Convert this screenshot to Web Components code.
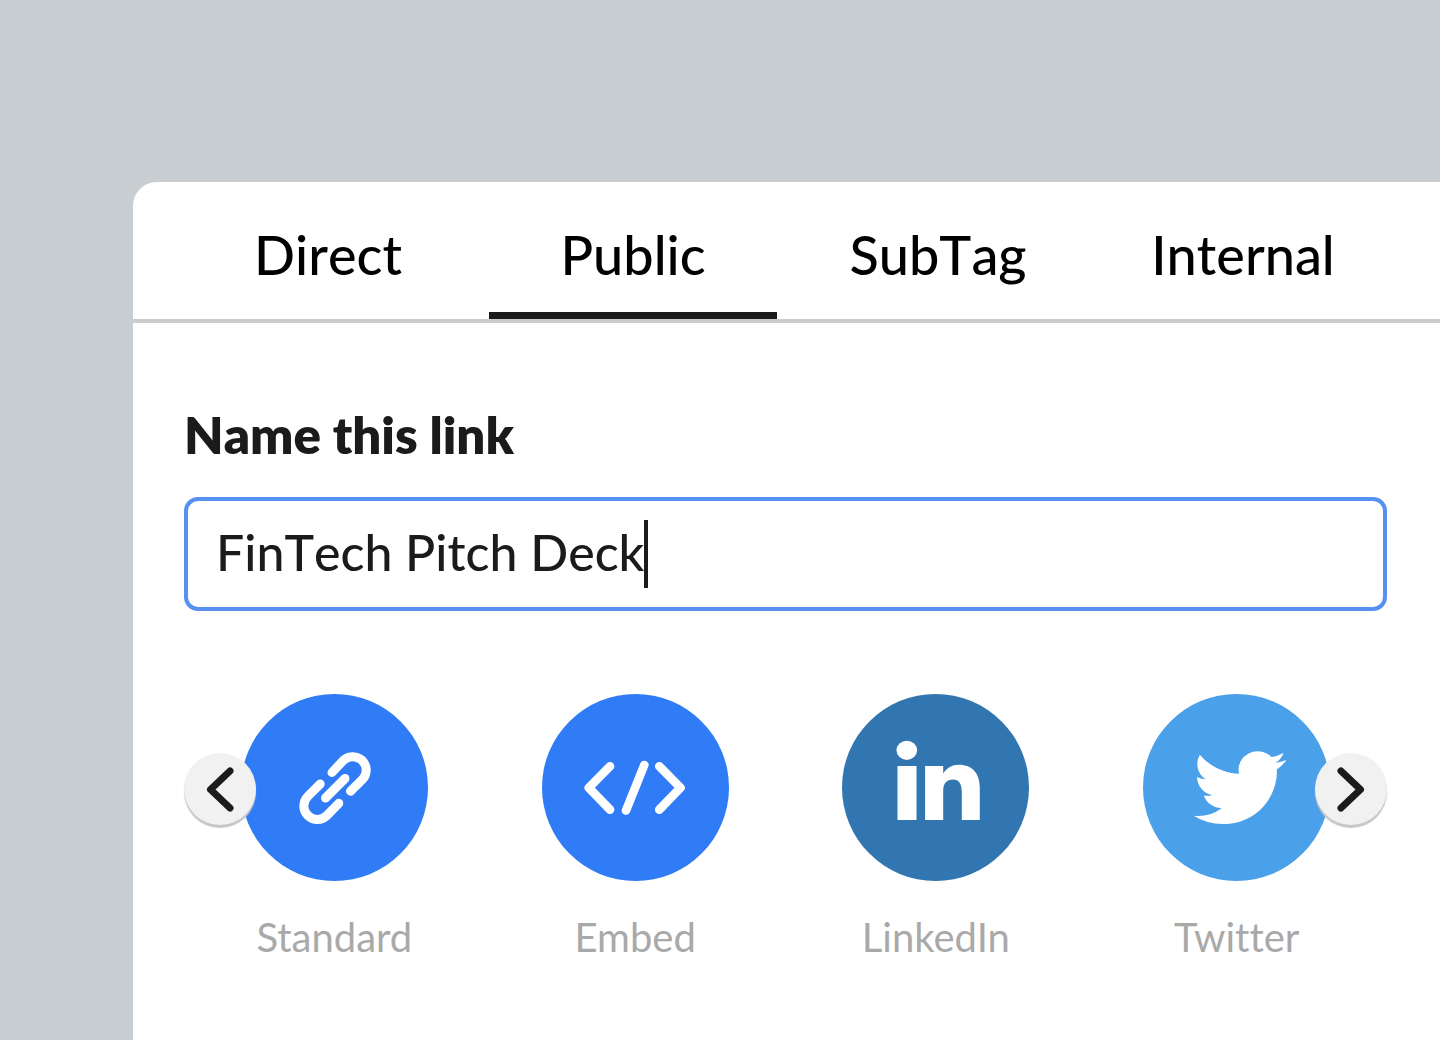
<!DOCTYPE html>
<html lang="en">
<head>
<meta charset="utf-8">
<meta name="viewport" content="width=device-width, initial-scale=1">
<title>Share link</title>
<style>
  body {
    margin: 0;
    background: #c9ced2;
    color: #1b1b1b;
    font-family: Lato, "Open Sans", sans-serif;
    font-kerning: none;
    font-variant-ligatures: none;
  }
</style>
</head>
<body>
<share-panel>
  <tab-bar slot="tabs">
    <tab-item>Direct</tab-item>
    <tab-item selected>Public</tab-item>
    <tab-item>SubTag</tab-item>
    <tab-item>Internal</tab-item>
  </tab-bar>
  <text-field label="Name this link" value="FinTech Pitch Deck"></text-field>
  <channel-carousel>
    <channel-item icon="link" style="--tint:#307bf6">Standard</channel-item>
    <channel-item icon="code" style="--tint:#307bf6">Embed</channel-item>
    <channel-item icon="linkedin" style="--tint:#3176b1">LinkedIn</channel-item>
    <channel-item icon="twitter" style="--tint:#4ba0ea">Twitter</channel-item>
  </channel-carousel>
</share-panel>

<script>
const reset = `
  *, *::before, *::after { box-sizing: border-box; }
  button { margin: 0; padding: 0; border: 0; background: none; color: inherit; font: inherit; font-kerning: inherit; font-variant-ligatures: inherit; cursor: pointer; }
  svg { display: block; }
`;

class BaseElement extends HTMLElement {
  constructor() {
    super();
    this.attachShadow({ mode: "open" });
  }
  connectedCallback() {
    this.shadowRoot.innerHTML = `<style>${reset}${this.css()}</style>${this.html()}`;
  }
}

customElements.define("share-panel", class extends BaseElement {
  css() { return `
    :host { display: flex; min-height: 100vh; padding: 182px 0 0 133px; box-sizing: border-box; }
    main { flex: 1; min-width: 0; background: #fff; border-top-left-radius: 24px; }
    .body { display: flex; flex-direction: column; padding: 82px 53px 64px 51px; }
    ::slotted(channel-carousel) { margin-top: 83px; }
  `; }
  html() { return `<main><slot name="tabs"></slot><div class="body"><slot></slot></div></main>`; }
});

customElements.define("tab-bar", class extends BaseElement {
  css() { return `
    :host { display: block; border-bottom: 4px solid #ccc; padding: 0 53px 0 51px; }
    nav { display: grid; grid-template-columns: repeat(4, 1fr); gap: 17px; }
  `; }
  html() { return `<nav role="tablist"><slot></slot></nav>`; }
});

customElements.define("tab-item", class extends BaseElement {
  css() { return `
    :host { display: block; }
    button {
      display: block; width: 100%; padding: 40px 0 25px;
      border-bottom: 7px solid transparent;
      color: #000; font-size: 54px; line-height: 65px; font-weight: 500; white-space: nowrap;
    }
    :host([selected]) button { border-bottom-color: #1b1b1b; }
  `; }
  html() {
    return `<button type="button" role="tab" aria-selected="${this.hasAttribute("selected")}"><slot></slot></button>`;
  }
});

customElements.define("text-field", class extends BaseElement {
  css() { return `
    :host { display: flex; flex-direction: column; gap: 32px; }
    label { font-size: 51px; line-height: 60px; font-weight: 800; }
    .box {
      display: flex; align-items: center; height: 114px; padding: 0 28px;
      border: 4px solid #5690f0; border-radius: 14px; background: #fff;
    }
    input {
      field-sizing: content; max-width: 100%; margin: 0; padding: 0 0 4px; border: 0; outline: 0;
      background: none; color: inherit; caret-color: transparent;
      font: 500 50px/64px Lato, "Open Sans", sans-serif;
      font-kerning: inherit; font-variant-ligatures: inherit;
    }
    .caret { width: 4px; height: 68px; background: #1b1b1b; }
  `; }
  html() {
    return `<label for="field">${this.getAttribute("label")}</label>
      <div class="box"><input id="field" type="text" value="${this.getAttribute("value")}"><span class="caret"></span></div>`;
  }
});

const chevron = points => `<svg width="72" height="72" viewBox="0 0 72 72" fill="none" stroke="#1b1b1b"
  stroke-width="7" stroke-linecap="round" stroke-linejoin="round"><path d="${points}"/></svg>`;

customElements.define("channel-carousel", class extends BaseElement {
  css() { return `
    :host { display: block; position: relative; }
    .track { display: grid; grid-template-columns: repeat(4, 1fr); }
    .arrow {
      position: absolute; top: 59px; width: 72px; height: 72px; border-radius: 50%;
      background: #f1f1f1; box-shadow: 0 3px 1px #c6c6c6;
    }
    .prev { left: 0; }
    .next { right: 0; }
  `; }
  html() {
    return `<div class="track"><slot></slot></div>
      <button class="arrow prev" type="button" aria-label="Previous">${chevron("M46 18 26.500 36.500 46 55")}</button>
      <button class="arrow next" type="button" aria-label="Next">${chevron("M26 18 45.500 36.500 26 55")}</button>`;
  }
});

const icons = {
  link: `<g fill="none" stroke="#fff" stroke-width="9" stroke-linecap="round">
    <path d="M91 78.500 102.800 66A13.500 13.500 0 0 1 121.900 85L109.500 97.200"/>
    <path d="M79.200 90 66.800 102.400A13.500 13.500 0 0 0 85.900 121.500L97.800 109.300"/>
    <path d="M104 84.500 84.500 104"/></g>`,
  code: `<g fill="none" stroke="#fff" stroke-width="8.7" stroke-linecap="round" stroke-linejoin="round">
    <path d="M68 72.300 46.800 93.800 68 115.600M117.300 72.300 138.500 93.800 117.300 115.600M102.300 71 84 116.500"/></g>`,
  linkedin: `<g fill="#fff"><ellipse cx="64.800" cy="56.300" rx="10.300" ry="9.600"/>
    <path d="M55.500 72H74.500V126H55.500ZM83.100 72H101.200V79.500C105 73.500 110 70.700 116.800 70.700C130.500 70.700 137.800 79.500 137.800 94V126H119.800V98C119.800 90 117 85.500 111 85.500C104.500 85.500 101.200 89.500 101.200 97V126H83.100Z"/></g>`,
  twitter: `<path fill="#fff" transform="translate(50.500 48.900) scale(3.870 3.730)" d="M23.953 4.57a10 10 0 01-2.825.775 4.958 4.958 0 002.163-2.723c-.951.555-2.005.959-3.127 1.184a4.92 4.92 0 00-8.384 4.482C7.69 8.095 4.067 6.13 1.64 3.162a4.822 4.822 0 00-.666 2.475c0 1.71.87 3.213 2.188 4.096a4.904 4.904 0 01-2.228-.616v.06a4.923 4.923 0 003.946 4.827 4.996 4.996 0 01-2.212.085 4.936 4.936 0 004.604 3.417 9.867 9.867 0 01-6.102 2.105c-.39 0-.779-.023-1.17-.067a13.995 13.995 0 007.557 2.209c9.053 0 13.998-7.496 13.998-13.985 0-.21 0-.42-.015-.63A9.935 9.935 0 0024 4.590z"/>`
};

customElements.define("channel-item", class extends BaseElement {
  css() { return `
    :host { display: block; min-width: 0; }
    button { display: flex; flex-direction: column; align-items: center; gap: 32px; width: 100%; }
    .disc { width: 187px; height: 187px; border-radius: 50%; background: var(--tint); }
    .name { color: #a9a9a9; font-size: 40px; line-height: 48px; font-kerning: normal; }
  `; }
  html() {
    return `<button type="button"><span class="disc"><svg width="187" height="187" viewBox="0 0 187 187"
      aria-hidden="true">${icons[this.getAttribute("icon")]}</svg></span><span class="name"><slot></slot></span></button>`;
  }
});
</script>
</body>
</html>
